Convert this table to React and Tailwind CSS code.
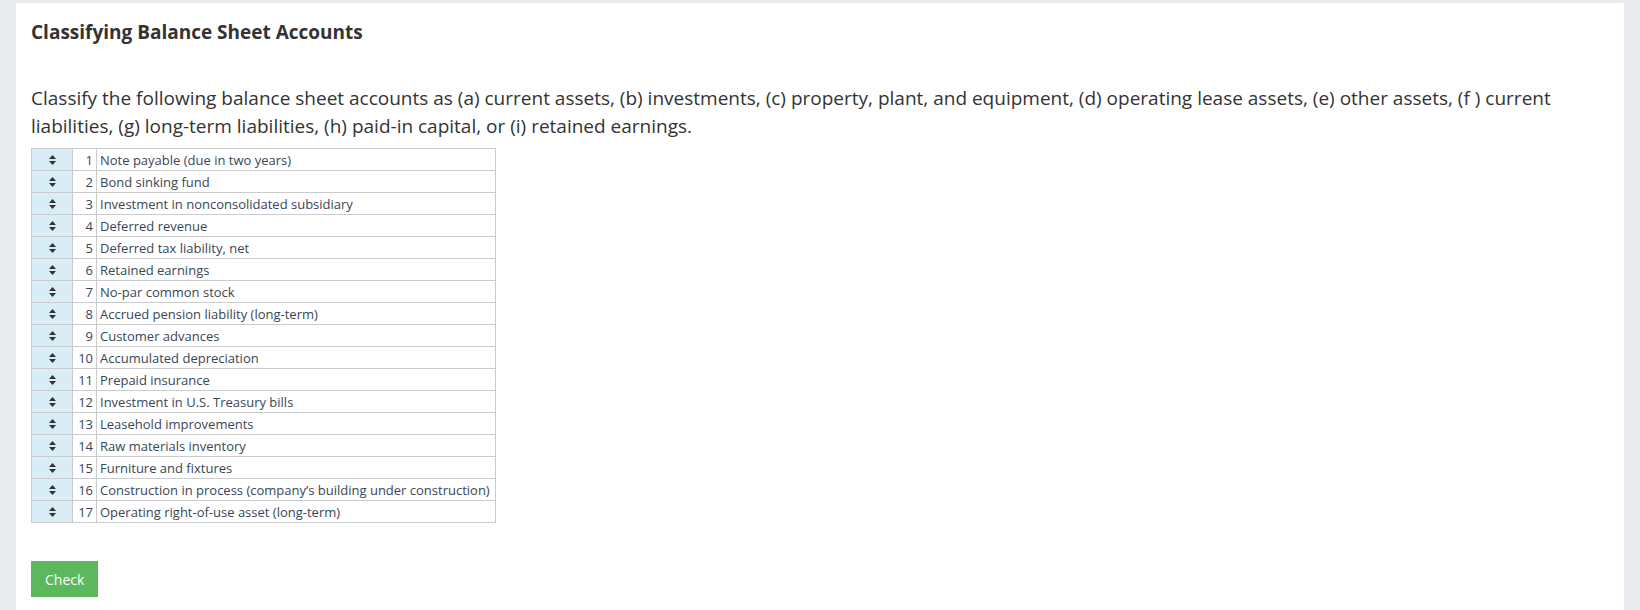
import React from 'react';

const accounts = [
  'Note payable (due in two years)',
  'Bond sinking fund',
  'Investment in nonconsolidated subsidiary',
  'Deferred revenue',
  'Deferred tax liability, net',
  'Retained earnings',
  'No-par common stock',
  'Accrued pension liability (long-term)',
  'Customer advances',
  'Accumulated depreciation',
  'Prepaid insurance',
  'Investment in U.S. Treasury bills',
  'Leasehold improvements',
  'Raw materials inventory',
  'Furniture and fixtures',
  'Construction in process (company\u2019s building under construction)',
  'Operating right-of-use asset (long-term)',
];

function SortIcon() {
  return (
    <svg width="7" height="10" viewBox="0 0 7 10" className="block">
      <path d="M3.5 0 L7 4 H0 Z" fill="#333" />
      <path d="M3.5 10 L7 6 H0 Z" fill="#333" />
    </svg>
  );
}

export default function App() {
  return (
    <div
      className="min-h-[610px] bg-[#e9eaed] pt-[3px] px-4"
      style={{ fontFamily: '"Open Sans", "Liberation Sans", sans-serif' }}
    >
      <div className="bg-white min-h-[607px] px-[15px] pt-[16px] pb-[13px]">
        <h1 className="text-[19px] leading-[26px] font-bold text-[#333]">Classifying Balance Sheet Accounts</h1>

        <p className="mt-[39px] text-[19px] leading-[28px] text-[#333]">
          Classify the following balance sheet accounts as (a) current assets, (b) investments, (c) property, plant, and equipment, (d) operating lease assets, (e) other assets, (f ) current liabilities, (g) long-term liabilities, (h) paid-in capital, or (i) retained earnings.
        </p>

        <table className="mt-[8px] border-collapse border border-[#ccc] text-[13px] text-[#3a4656]">
          <tbody>
            {accounts.map((name, i) => (
              <tr key={i} className="h-[22px]">
                <td className="w-[41px] bg-[#d9edf7] border border-[#ccc] p-0">
                  <div className="flex justify-center">
                    <SortIcon />
                  </div>
                </td>
                <td className="w-[24px] border border-[#ccc] pr-[3px] text-right leading-[20px]">{i + 1}</td>
                <td className="w-[399px] border border-[#ccc] pl-[3px] pr-[3px] leading-[20px] whitespace-nowrap">{name}</td>
              </tr>
            ))}
          </tbody>
        </table>

        <button className="mt-[38px] h-[36px] px-[14px] bg-[#5cb85c] text-white text-[14px]">Check</button>
      </div>
    </div>
  );
}
